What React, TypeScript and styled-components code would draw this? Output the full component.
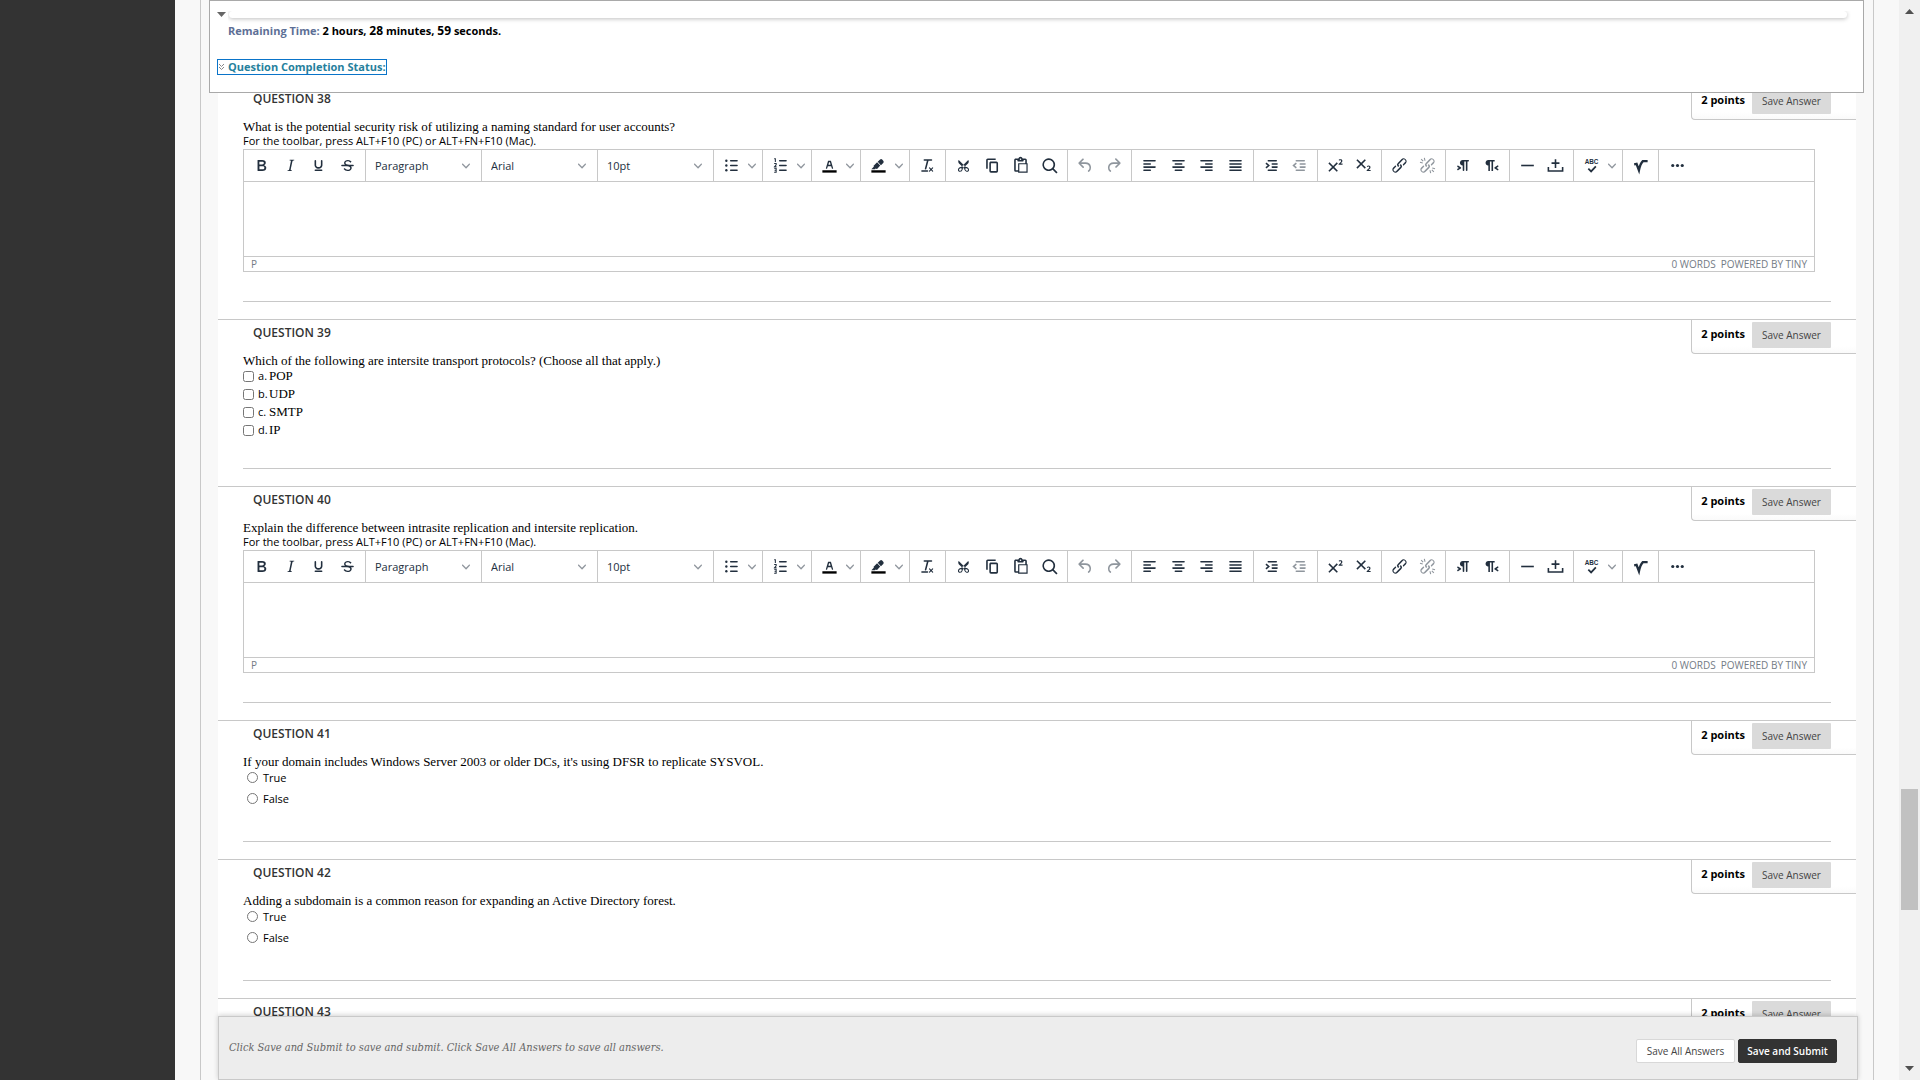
import React, { useId, useState } from "react";
import styled, { createGlobalStyle } from "styled-components";

const sans = '"Open Sans", "Noto Sans", sans-serif';
const serif = '"Liberation Serif", "Times New Roman", serif';
const slab = '"DejaVu Serif Condensed", "DejaVu Serif", serif';
const line = "#c8c8c8";
const ink = "#222f3e";

const GlobalStyle = createGlobalStyle`
  *, *::before, *::after { box-sizing: border-box; }
  body { margin: 0; background: #f8f8f8; font: 11px/14px ${sans}; color: #000; overflow: hidden; }
  button, input, select, textarea { font-family: inherit; margin: 0; }
`;

const Page = styled.div`
  display: flex;
  height: 100vh;
  overflow: hidden;
`;

const Sidebar = styled.aside`
  flex: 0 0 175px;
  background: #333;
`;

const Main = styled.main`
  position: relative;
  flex: 1;
  min-width: 0;
  padding: 0 25px;
`;

const Frame = styled.div`
  height: 100%;
  padding: 0 17px;
  border: solid ${line};
  border-width: 0 1px;
  overflow: hidden;
`;

const QuestionList = styled.div`
  padding-top: 85px;
  background: #fff;
`;

/* Timer header, pinned above the questions */
const TimerPanel = styled.header`
  position: absolute;
  z-index: 2;
  top: 0;
  left: 34px;
  right: 35px;
  height: 93px;
  padding: 11px 16px 0 7px;
  background: #fff;
  border: 1px solid #a9a9a9;
`;

const TimerTop = styled.div`
  display: flex;
  align-items: center;
  gap: 3px;
  height: 5px;
`;

const Toggle = styled.button`
  display: flex;
  padding: 0;
  border: 0;
  background: none;
  color: #666;
`;

const TimerBar = styled.div`
  flex: 1;
  height: 7px;
  border-radius: 4px;
  background: #fff;
  box-shadow: 0 1px 4px rgba(0, 0, 0, 0.25);
  clip-path: inset(0 -4px -6px -1px);
`;

const Remaining = styled.p`
  margin: 6px 0 0 11px;
  font-weight: 700;
  line-height: 16px;
`;

const RemainingLabel = styled.span`
  color: #5d6f96;
`;

const Big = styled.span`
  font-size: 12px;
`;

const StatusLink = styled.a`
  display: inline-flex;
  align-items: center;
  gap: 4px;
  height: 16px;
  margin-top: 20px;
  padding-left: 1px;
  border: 1px solid #0a74c9;
  color: #26809c;
  font-weight: 700;
  text-decoration: none;
`;

const Question = styled.section`
  border-top: 1px solid ${line};
  padding-bottom: 17px;
`;

const QuestionHead = styled.div`
  display: flex;
  justify-content: space-between;
  align-items: flex-start;
`;

const QuestionTitle = styled.h3`
  margin: 4px 0 0 35px;
  color: #333;
  font-size: 12px;
  line-height: 18px;
  font-weight: 600;
`;

const PointsBox = styled.div`
  display: flex;
  align-items: flex-start;
  gap: 7px;
  height: 34px;
  padding: 2px 25px 0 9px;
  border: solid ${line};
  border-width: 0 0 1px 1px;
  border-bottom-left-radius: 4px;
  background: linear-gradient(#fff 80%, #fafafa);
`;

const Points = styled.span`
  line-height: 24px;
  font-weight: 700;
`;

const SaveAnswer = styled.button`
  width: 79px;
  height: 26px;
  padding: 0;
  border: 0;
  border-radius: 1px;
  background: #dadada;
  color: #444;
  font-size: 10px;
`;

const QuestionBody = styled.div`
  margin: 0 25px;
  padding-bottom: 29px;
  border-bottom: 1px solid ${line};
`;

const Prompt = styled.p`
  margin: 0;
  font: 13px/13px ${serif};
`;

const Hint = styled.p`
  margin: 0;
  line-height: 16px;
`;

const Editor = styled.div`
  margin-right: 16px;
  border: 1px solid ${line};
`;

const Toolbar = styled.div`
  display: flex;
  height: 32px;
  border-bottom: 1px solid ${line};
`;

const groupWidths = { one: 36, two: 64, four: 122, split: 49, select: 116 };

const Group = styled.div<{ $size: keyof typeof groupWidths; $last?: boolean }>`
  display: flex;
  align-items: center;
  flex: 0 0 ${(p) => groupWidths[p.$size]}px;
  padding: 0 ${(p) => (p.$size === "select" ? 0 : 3)}px;
  border-right: ${(p) => (p.$last ? 0 : 1)}px solid ${line};
`;

const ToolButton = styled.button<{ $dim?: boolean; $narrow?: boolean }>`
  display: flex;
  align-items: center;
  justify-content: center;
  flex: ${(p) => (p.$narrow ? "0 0 14px" : "1 1 0")};
  height: 28px;
  padding: 0;
  border: 0;
  background: none;
  color: ${ink};
  opacity: ${(p) => (p.$dim ? 0.5 : 1)};
`;

const SelectWrap = styled.div`
  display: flex;
  align-items: center;
  flex: 1;
  min-width: 0;
  padding-right: 11px;
  color: ${ink};
`;

const ToolSelect = styled.select`
  appearance: none;
  flex: 1;
  min-width: 0;
  height: 28px;
  padding: 0 0 0 9px;
  border: 0;
  background: none;
  color: ${ink};
  font-size: 11px;
`;

const Chevron = styled.svg`
  flex: 0 0 8px;
  width: 8px;
  height: 8px;
  fill: ${ink};
  opacity: 0.5;
  pointer-events: none;
`;

const Glyph = styled.svg`
  width: 19px;
  height: 19px;
  fill: currentColor;
  flex: none;
`;

const TextArea = styled.textarea`
  display: block;
  width: 100%;
  height: 74px;
  padding: 8px;
  border: 0;
  outline: 0;
  resize: none;
  font-size: 13px;
`;

const StatusBar = styled.div`
  display: flex;
  gap: 5px;
  padding: 0 7px;
  border-top: 1px solid ${line};
  color: #747c86;
  font-size: 10px;
  line-height: 14px;
  text-transform: uppercase;
`;

const PathItem = styled.span`
  flex: 1;
`;

const StatusAnchor = styled.a`
  color: inherit;
  text-decoration: none;
`;

const CheckRow = styled.label`
  display: flex;
  align-items: center;
  height: 18px;
`;

const Check = styled.input`
  width: 11px;
  height: 11px;
`;

const Letter = styled.span`
  width: 11px;
  margin-left: 4px;
`;

const Answer = styled.span`
  font: 13px/16px ${serif};
`;

const RadioList = styled.div`
  display: flex;
  flex-direction: column;
  gap: 4px;
  padding: 1px 0 5px 4px;
`;

const RadioRow = styled.label`
  display: flex;
  align-items: center;
  gap: 5px;
  height: 17px;
`;

const Radio = styled.input`
  width: 11px;
  height: 11px;
`;

/* Submit bar, pinned to the bottom of the window */
const SubmitBar = styled.footer`
  position: absolute;
  z-index: 2;
  left: 43px;
  right: 41px;
  bottom: 0;
  display: flex;
  align-items: center;
  gap: 3px;
  height: 64px;
  padding: 6px 20px 0 10px;
  background: #ededed;
  border: 1px solid #c9c9c9;
  box-shadow: 0 -1px 5px rgba(0, 0, 0, 0.18);
`;

const SubmitHint = styled.p`
  flex: 1;
  margin: 0 0 6px;
  color: #666;
  font: italic 11px/16px ${slab};
`;

const SubmitButton = styled.button<{ $primary?: boolean }>`
  width: 99px;
  height: 24px;
  padding: 0;
  border: ${(p) => (p.$primary ? "1px solid #333" : "1px solid #d8d8d8")};
  border-radius: 2px;
  background: ${(p) => (p.$primary ? "#333" : "#fff")};
  color: ${(p) => (p.$primary ? "#fff" : "#444")};
  font-size: 10px;
  font-weight: ${(p) => (p.$primary ? 600 : 400)};
`;

const ScrollTrack = styled.div`
  display: flex;
  flex-direction: column;
  align-items: center;
  flex: 0 0 21px;
  padding: 9px 0;
  background: #f0f0f0;
`;

const ScrollArrow = styled.svg`
  flex: none;
  width: 9px;
  height: 5px;
  fill: #505050;
`;

const ScrollSpace = styled.div<{ $grow: number }>`
  flex: ${(p) => p.$grow} 1 0;
`;

const ScrollThumb = styled.div`
  flex: 0 0 121px;
  width: 17px;
  background: #c1c1c1;
`;

const bars = (rows: number[][]) =>
  rows.map(([x, y, w]) => <rect key={y} x={x} y={y} width={w} height="2" rx="1" />);

const chain =
  "M6.2 12.3a1 1 0 011.4 1.4l-2.1 2a2 2 0 102.7 2.8l4.8-4.8a1 1 0 000-1.4 1 1 0 111.4-1.3 2.9 2.9 0 010 4L9.6 20a3.9 3.9 0 01-5.5-5.5l2-2zm11.6-.6a1 1 0 01-1.4-1.4l2-2a2 2 0 10-2.6-2.8L11 10.3a1 1 0 000 1.4A1 1 0 119.6 13a2.9 2.9 0 010-4L14.4 4a3.9 3.9 0 015.5 5.5l-2 2z";

const icons: Record<string, React.ReactNode> = {
  Bold: (
    <path d="M7.8 19c-.3 0-.5 0-.6-.2l-.2-.5V5.7c0-.2 0-.4.2-.5l.6-.2h5c1.5 0 2.7.3 3.5 1 .7.6 1.1 1.4 1.1 2.5a3 3 0 01-.6 1.9c-.4.6-1 1-1.6 1.2.4.1.9.3 1.3.6s.8.7 1 1.2c.4.4.5 1 .5 1.6 0 1.3-.4 2.3-1.3 3-.8.7-2.1 1-3.8 1H7.8zm5-8.3c.6 0 1.2-.1 1.6-.5.4-.3.6-.7.6-1.3 0-1.1-.8-1.7-2.3-1.7H9.3v3.5h3.4zm.5 6c.7 0 1.3-.1 1.7-.4.4-.4.6-.9.6-1.5s-.2-1-.7-1.4c-.4-.3-1-.4-2-.4H9.4v3.8h4z" />
  ),
  Italic: (
    <path d="M16.7 4.7l-.1.9h-.3c-.6 0-1 0-1.4.3-.3.3-.4.6-.5 1.1l-2.1 9.8v.6c0 .5.4.8 1.4.8h.2l-.2.8H8l.2-.8h.2c1.1 0 1.8-.5 2-1.5l2-9.8.1-.5c0-.6-.4-.8-1.4-.8h-.3l.2-.9h5.8z" />
  ),
  Underline: (
    <path d="M16 5c.6 0 1 .4 1 1v5.5a4 4 0 01-.4 1.8l-1 1.4a5.3 5.3 0 01-5.5 1 5 5 0 01-1.6-1c-.5-.4-.8-.9-1.1-1.4a4 4 0 01-.4-1.8V6c0-.6.4-1 1-1s1 .4 1 1v5.5c0 .3 0 .6.2 1l.6.7a3.3 3.3 0 002.2.8 3.4 3.4 0 002.2-.8c.3-.2.4-.5.6-.8l.2-.9V6c0-.6.4-1 1-1zM8 17h8c.6 0 1 .4 1 1s-.4 1-1 1H8a1 1 0 010-2z" />
  ),
  Strikethrough: (
    <>
      <path d="M15.6 8.5c-.5-.7-1-1.1-1.3-1.3-.6-.4-1.3-.6-2-.6-2.7 0-2.8 1.7-2.8 2.1 0 1.6 1.8 2 3.2 2.3 4.4.9 4.6 2.8 4.6 3.9 0 1.4-.7 4.1-5 4.1A6.2 6.2 0 017 16.4l1.5-1.1c.4.6 1.6 2 3.7 2 1.6 0 2.5-.4 3-1.2.4-.8.3-2-.8-2.6-.7-.4-1.6-.7-2.9-1-1-.2-3.9-.8-3.9-3.6C7.6 6 10.3 5 12.4 5c2.9 0 4.2 1.6 4.7 2.4l-1.5 1.1z" />
      <path d="M5 11h14a1 1 0 010 2H5a1 1 0 010-2z" />
    </>
  ),
  "Bullet list": (
    <>
      {bars([[10, 5, 10], [10, 11, 10], [10, 17, 10]])}
      <circle cx="5.5" cy="6" r="1.5" />
      <circle cx="5.5" cy="12" r="1.5" />
      <circle cx="5.5" cy="18" r="1.5" />
    </>
  ),
  "Numbered list": (
    <>
      {bars([[10, 5, 10], [10, 11, 10], [10, 17, 10]])}
      <path
        d="M4 3.500h1.500V7.500M4 9.500h2.500v1.500L4.500 13.500H7M4 15.500h2.500v5H4M4.500 18h2"
        fill="none"
        stroke="currentColor"
        strokeWidth="1.300"
      />
    </>
  ),
  "Text color": (
    <>
      <path d="M3 18h18v3H3z" fill="#000" />
      <path d="M8.7 16h-.8a.5.5 0 01-.5-.6l2.7-9c.1-.3.3-.4.5-.4h2.8c.2 0 .4.1.5.4l2.7 9a.5.5 0 01-.5.6h-.8a.5.5 0 01-.4-.4l-.7-2.2c0-.3-.3-.4-.5-.4h-3.4c-.2 0-.4.1-.5.4l-.7 2.2c0 .3-.2.4-.4.4zm2.6-7.6l-.6 2a.5.5 0 00.5.6h1.6a.5.5 0 00.5-.6l-.6-2c0-.3-.3-.4-.5-.4h-.4c-.2 0-.4.1-.5.4z" />
    </>
  ),
  "Background color": (
    <>
      <path d="M3 18h18v3H3z" fill="#000" />
      <path d="M7.7 16.7H3l3.3-3.3-.7-.8L10.2 8l4 4.1-4 4.2c-.2.2-.6.2-.8 0l-.6-.7-1.1 1.1zm5-7.5L11 7.4l3-2.9a2 2 0 012.6 0L18 6c.7.7.7 2 0 2.7l-2.9 2.9-1.8-1.8-.5-.6" />
    </>
  ),
  "Clear formatting": (
    <path d="M13.2 6a1 1 0 010 .2l-2.6 10a1 1 0 01-1 .8h-.2a.8.8 0 01-.8-1l2.6-10H8a1 1 0 110-2h9a1 1 0 010 2h-3.8zM5 18h7a1 1 0 010 2H5a1 1 0 010-2zm13 1.5L16.5 18 15 19.5a.7.7 0 01-1-1l1.5-1.5-1.5-1.5a.7.7 0 011-1l1.5 1.5 1.5-1.5a.7.7 0 011 1L17.5 17l1.5 1.5a.7.7 0 01-1 1z" />
  ),
  Cut: (
    <path d="M18 15c.6.7 1 1.4 1 2.3 0 .8-.2 1.5-.7 2l-.8.5-1 .2c-.4 0-.8 0-1.2-.3a3.9 3.9 0 01-2.1-2.2c-.2-.5-.3-1-.2-1.5l-1-1-1 1c0 .5 0 1-.2 1.5-.1.5-.4 1-.9 1.4-.3.4-.7.6-1.2.8l-1.2.3c-.4 0-.7 0-1-.2-.3 0-.6-.3-.8-.5-.5-.5-.8-1.2-.7-2 0-.9.4-1.6 1-2.2A3.7 3.7 0 018.6 14H9l1-1-4-4-.5-1a3.3 3.3 0 010-2c0-.4.3-.7.5-1l6 6 6-6 .5 1a3.3 3.3 0 010 2c0 .4-.3.7-.5 1l-4 4 1 1h.5c.4 0 .8 0 1.2.3.5.2.9.4 1.2.8zm-8.5 2.2l.1-.4v-.3-.4a1 1 0 00-.2-.5 1 1 0 00-.4-.2 1.6 1.6 0 00-.8 0 2.6 2.6 0 00-.8.3 2.5 2.5 0 00-.9 1.1l-.1.4v.7l.2.5.5.2h.7a2.5 2.5 0 00.8-.3 2.8 2.8 0 001-1zm2.5-2.8c.4 0 .7-.1 1-.4.3-.3.4-.6.4-1s-.1-.7-.4-1c-.3-.3-.6-.4-1-.4s-.7.1-1 .4c-.3.3-.4.6-.4 1s.1.7.4 1c.3.3.6.4 1 .4zm5.4 4l.2-.5v-.4-.3a2.6 2.6 0 00-.3-.8 2.4 2.4 0 00-.7-.7 2.5 2.5 0 00-.8-.3 1.5 1.5 0 00-.8 0 1 1 0 00-.4.2 1 1 0 00-.2.5 1.5 1.5 0 000 .7v.4l.3.4.3.4a2.8 2.8 0 00.8.5l.4.1h.7l.5-.2z" />
  ),
  Copy: (
    <path d="M16 3H6a2 2 0 00-2 2v11h2V5h10V3zm1 4a2 2 0 012 2v10a2 2 0 01-2 2h-7a2 2 0 01-2-2V9c0-1.2.9-2 2-2h7zm0 12V9h-7v10h7z" />
  ),
  Paste: (
    <path d="M18 9V5h-2v1c0 .6-.4 1-1 1H9a1 1 0 01-1-1V5H6v13h3V9h9zM9 20H6a2 2 0 01-2-2V5c0-1.1.9-2 2-2h3.2A3 3 0 0112 1a3 3 0 012.8 2H18a2 2 0 012 2v4h1v12H9v-1zm1.5-9.5v9h9v-9h-9zM12 3a1 1 0 00-1 1c0 .5.4 1 1 1s1-.5 1-1-.4-1-1-1z" />
  ),
  Find: (
    <path d="M16 17.3a8 8 0 111.4-1.4l4.3 4.4a1 1 0 01-1.4 1.4L16 17.3zm-5-.3a6 6 0 100-12 6 6 0 000 12z" />
  ),
  Undo: (
    <path d="M6.4 8H12c3.7 0 6.2 2 6.8 5.1.6 2.7-.4 5.6-2.3 6.8a1 1 0 01-1-1.8c1.1-.6 1.8-2.7 1.4-4.6-.5-2.1-2.1-3.5-4.9-3.5H6.4l3.3 3.3a1 1 0 11-1.4 1.4l-5-5a1 1 0 010-1.4l5-5a1 1 0 011.4 1.4L6.4 8z" />
  ),
  Redo: (
    <path d="M17.6 10H12c-2.8 0-4.4 1.4-4.9 3.5-.4 2 .3 4 1.4 4.6a1 1 0 11-1 1.8c-2-1.2-2.9-4.1-2.3-6.8.6-3 3-5.1 6.8-5.1h5.6l-3.3-3.3a1 1 0 111.4-1.4l5 5a1 1 0 010 1.4l-5 5a1 1 0 01-1.4-1.4l3.3-3.3z" />
  ),
  "Align left": bars([[4, 5, 16], [4, 9, 10], [4, 13, 16], [4, 17, 10]]),
  "Align center": bars([[4, 5, 16], [7, 9, 10], [4, 13, 16], [7, 17, 10]]),
  "Align right": bars([[4, 5, 16], [10, 9, 10], [4, 13, 16], [10, 17, 10]]),
  Justify: bars([[4, 5, 16], [4, 9, 16], [4, 13, 16], [4, 17, 16]]),
  "Increase indent": (
    <>
      {bars([[7, 5, 12], [12, 9, 8], [12, 13, 8], [7, 17, 12]])}
      <path d="M5 9l3.500 3L5 15" fill="none" stroke="currentColor" strokeWidth="2" />
    </>
  ),
  "Decrease indent": (
    <>
      {bars([[7, 5, 12], [12, 9, 8], [12, 13, 8], [7, 17, 12]])}
      <path d="M8 9l-3.500 3L8 15" fill="none" stroke="currentColor" strokeWidth="2" />
    </>
  ),
  Superscript: (
    <path d="M15 9.4L10.4 14l4.6 4.6-1.4 1.4L9 15.4 4.4 20 3 18.6 7.6 14 3 9.4 4.4 8 9 12.6 13.6 8 15 9.4zm5.9 1.6h-5v-1l1-.8 1.7-1.6c.3-.5.5-.9.5-1.3 0-.3 0-.5-.2-.7-.2-.2-.5-.3-.9-.3l-.8.2-.7.4-.4-1.2c.2-.2.5-.4 1-.5.3-.2.8-.2 1.2-.2.8 0 1.4.2 1.8.6.4.4.6 1 .6 1.6 0 .5-.2 1-.5 1.5l-1.3 1.4-.6.5h2.6V11z" />
  ),
  Subscript: (
    <path d="M10.4 10l4.6 4.6-1.4 1.4L9 11.4 4.4 16 3 14.6 7.6 10 3 5.4 4.4 4 9 8.6 13.6 4 15 5.4 10.4 10zM21 19h-5v-1l1-.8 1.7-1.6c.3-.4.5-.8.5-1.2 0-.3 0-.6-.2-.7-.2-.2-.5-.3-.9-.3a2 2 0 00-.8.2l-.7.3-.4-1.1 1-.6 1.2-.2c.8 0 1.4.3 1.8.7.4.4.6.9.6 1.5s-.2 1.1-.5 1.6a8 8 0 01-1.3 1.3l-.6.6h2.6V19z" />
  ),
  Link: <path d={chain} />,
  "Remove link": (
    <>
      <path d={chain} />
      <path
        d="M8 2.500l.8 3.500M2.500 8l3.500.8M4 4l2.500 2.500M16 21.500l-.8-3.500M21.500 16l-3.500-.8M20 20l-2.500-2.500"
        fill="none"
        stroke="currentColor"
        strokeWidth="1.400"
      />
    </>
  ),
  "Left to right": (
    <path d="M11 5h7a1 1 0 010 2h-1v11a1 1 0 01-2 0V7h-2v11a1 1 0 01-2 0v-6c-.5 0-1 0-1.4-.3A3.4 3.4 0 017.8 10a3.3 3.3 0 010-2.8 3.4 3.4 0 011.8-1.8L11 5zM4.4 16.2L6.2 15l-1.8-1.2a1 1 0 011.2-1.6l3 2a1 1 0 010 1.6l-3 2a1 1 0 11-1.2-1.6z" />
  ),
  "Right to left": (
    <path d="M8 5h8v2h-2v12h-2V7h-2v12H8v-7c-.5 0-1 0-1.4-.3A3.4 3.4 0 014.8 10a3.3 3.3 0 010-2.8 3.4 3.4 0 011.8-1.8L8 5zm12 11.2a1 1 0 11-1 1.6l-3-2a1 1 0 010-1.6l3-2a1 1 0 111 1.6L18.4 15l1.8 1.2z" />
  ),
  "Horizontal line": <path d="M4 11h16v2H4z" />,
  "Insert content": (
    <path
      d="M3 14v5h18v-5M12 4v11M7 9h10"
      fill="none"
      stroke="currentColor"
      strokeWidth="2"
    />
  ),
  Spellcheck: (
    <>
      <text
        x="12"
        y="10"
        textAnchor="middle"
        fontFamily="Liberation Sans, sans-serif"
        fontSize="8"
        fontWeight="700"
      >
        ABC
      </text>
      <path d="M8 16l3.500 3.500 6-6.500" fill="none" stroke="currentColor" strokeWidth="2.200" />
    </>
  ),
  Math: (
    <path
      d="M4 10.500l3-.5 3 8c1-5 2.500-9 5-11.500h6"
      fill="none"
      stroke="currentColor"
      strokeWidth="3"
    />
  ),
  More: (
    <>
      <circle cx="6" cy="12" r="2" />
      <circle cx="12" cy="12" r="2" />
      <circle cx="18" cy="12" r="2" />
    </>
  ),
};

type Item = {
  size: keyof typeof groupWidths;
  tools?: string[];
  select?: [string, string];
};

const toolbarItems: Item[] = [
  { size: "four", tools: ["Bold", "Italic", "Underline", "Strikethrough"] },
  { size: "select", select: ["Block format", "Paragraph"] },
  { size: "select", select: ["Font family", "Arial"] },
  { size: "select", select: ["Font size", "10pt"] },
  { size: "split", tools: ["Bullet list"] },
  { size: "split", tools: ["Numbered list"] },
  { size: "split", tools: ["Text color"] },
  { size: "split", tools: ["Background color"] },
  { size: "one", tools: ["Clear formatting"] },
  { size: "four", tools: ["Cut", "Copy", "Paste", "Find"] },
  { size: "two", tools: ["Undo", "Redo"] },
  { size: "four", tools: ["Align left", "Align center", "Align right", "Justify"] },
  { size: "two", tools: ["Increase indent", "Decrease indent"] },
  { size: "two", tools: ["Superscript", "Subscript"] },
  { size: "two", tools: ["Link", "Remove link"] },
  { size: "two", tools: ["Left to right", "Right to left"] },
  { size: "two", tools: ["Horizontal line", "Insert content"] },
  { size: "split", tools: ["Spellcheck"] },
  { size: "one", tools: ["Math"] },
  { size: "one", tools: ["More"] },
];

const disabledTools = ["Undo", "Redo", "Decrease indent", "Remove link"];

const ChevronDown = () => (
  <Chevron viewBox="0 0 10 10" aria-hidden="true">
    <path d="M8.7 2.2c.3-.3.8-.3 1 0 .4.4.4.9 0 1.2L5.7 7.8c-.3.3-.9.3-1.2 0L.2 3.4a.8.8 0 010-1.2c.3-.3.8-.3 1.1 0L5 6l3.7-3.8z" />
  </Chevron>
);

function RichEditor({ label }: { label: string }) {
  return (
    <Editor>
      <Toolbar role="toolbar">
        {toolbarItems.map((item, i) => (
          <Group key={i} $size={item.size} $last={i === toolbarItems.length - 1}>
            {item.select && (
              <SelectWrap>
                <ToolSelect aria-label={item.select[0]}>
                  <option>{item.select[1]}</option>
                </ToolSelect>
                <ChevronDown />
              </SelectWrap>
            )}
            {item.tools?.map((tool) => (
              <ToolButton
                key={tool}
                type="button"
                aria-label={tool}
                $dim={disabledTools.includes(tool)}
              >
                <Glyph viewBox="0 0 24 24" aria-hidden="true">
                  {icons[tool]}
                </Glyph>
              </ToolButton>
            ))}
            {item.size === "split" && (
              <ToolButton type="button" aria-label={`${item.tools?.[0]} options`} $narrow>
                <ChevronDown />
              </ToolButton>
            )}
          </Group>
        ))}
      </Toolbar>
      <TextArea aria-label={label} />
      <StatusBar>
        <PathItem>p</PathItem>
        <span>0 words</span>
        <StatusAnchor href="#tiny">Powered by Tiny</StatusAnchor>
      </StatusBar>
    </Editor>
  );
}

type QuestionData = {
  number: number;
  prompt: string;
  kind: "essay" | "check" | "bool";
  options?: string[];
};

const questions: QuestionData[] = [
  {
    number: 38,
    kind: "essay",
    prompt: "What is the potential security risk of utilizing a naming standard for user accounts?",
  },
  {
    number: 39,
    kind: "check",
    prompt: "Which of the following are intersite transport protocols? (Choose all that apply.)",
    options: ["POP", "UDP", "SMTP", "IP"],
  },
  {
    number: 40,
    kind: "essay",
    prompt: "Explain the difference between intrasite replication and intersite replication.",
  },
  {
    number: 41,
    kind: "bool",
    prompt: "If your domain includes Windows Server 2003 or older DCs, it's using DFSR to replicate SYSVOL.",
    options: ["True", "False"],
  },
  {
    number: 42,
    kind: "bool",
    prompt: "Adding a subdomain is a common reason for expanding an Active Directory forest.",
    options: ["True", "False"],
  },
  { number: 43, kind: "bool", prompt: "", options: [] },
];

function QuestionBlock({ number, prompt, kind, options = [] }: QuestionData) {
  const group = useId();
  const [choice, setChoice] = useState("");
  return (
    <Question>
      <QuestionHead>
        <QuestionTitle>QUESTION {number}</QuestionTitle>
        <PointsBox>
          <Points>2 points</Points>
          <SaveAnswer type="button">Save Answer</SaveAnswer>
        </PointsBox>
      </QuestionHead>
      <QuestionBody>
        <Prompt>{prompt}</Prompt>
        {kind === "essay" && (
          <>
            <Hint>For the toolbar, press ALT+F10 (PC) or ALT+FN+F10 (Mac).</Hint>
            <RichEditor label={`Answer to question ${number}`} />
          </>
        )}
        {kind === "check" && (
          <div>
            {options.map((option, i) => (
              <CheckRow key={option}>
                <Check type="checkbox" />
                <Letter>{"abcd"[i]}.</Letter>
                <Answer>{option}</Answer>
              </CheckRow>
            ))}
          </div>
        )}
        {kind === "bool" && (
          <RadioList>
            {options.map((option) => (
              <RadioRow key={option}>
                <Radio
                  type="radio"
                  name={group}
                  checked={choice === option}
                  onChange={() => setChoice(option)}
                />
                {option}
              </RadioRow>
            ))}
          </RadioList>
        )}
      </QuestionBody>
    </Question>
  );
}

export default function App() {
  return (
    <Page>
      <GlobalStyle />
      <Sidebar />
      <Main>
        <TimerPanel>
          <TimerTop>
            <Toggle type="button" aria-label="Toggle timer">
              <svg width="9" height="5" viewBox="0 0 9 5" fill="currentColor">
                <path d="M0 0h9L4.500 5z" />
              </svg>
            </Toggle>
            <TimerBar />
          </TimerTop>
          <Remaining>
            <RemainingLabel>Remaining Time:</RemainingLabel> 2 hours, <Big>28</Big> minutes,{" "}
            <Big>59</Big> seconds.
          </Remaining>
          <StatusLink href="#status">
            <svg width="5" height="6" viewBox="0 0 5 6" fill="none" stroke="#888">
              <path d="M0 0l2.500 2.500L5 0M0 3l2.500 2.500L5 3" />
            </svg>
            Question Completion Status:
          </StatusLink>
        </TimerPanel>
        <Frame>
          <QuestionList>
            {questions.map((q) => (
              <QuestionBlock key={q.number} {...q} />
            ))}
          </QuestionList>
        </Frame>
        <SubmitBar>
          <SubmitHint>
            Click Save and Submit to save and submit. Click Save All Answers to save all answers.
          </SubmitHint>
          <SubmitButton type="button">Save All Answers</SubmitButton>
          <SubmitButton type="button" $primary>
            Save and Submit
          </SubmitButton>
        </SubmitBar>
      </Main>
      <ScrollTrack aria-hidden="true">
        <ScrollArrow viewBox="0 0 9 5">
          <path d="M0 5h9L4.500 0z" />
        </ScrollArrow>
        <ScrollSpace $grow={775} />
        <ScrollThumb />
        <ScrollSpace $grow={156} />
        <ScrollArrow viewBox="0 0 9 5">
          <path d="M0 0h9L4.500 5z" />
        </ScrollArrow>
      </ScrollTrack>
    </Page>
  );
}
